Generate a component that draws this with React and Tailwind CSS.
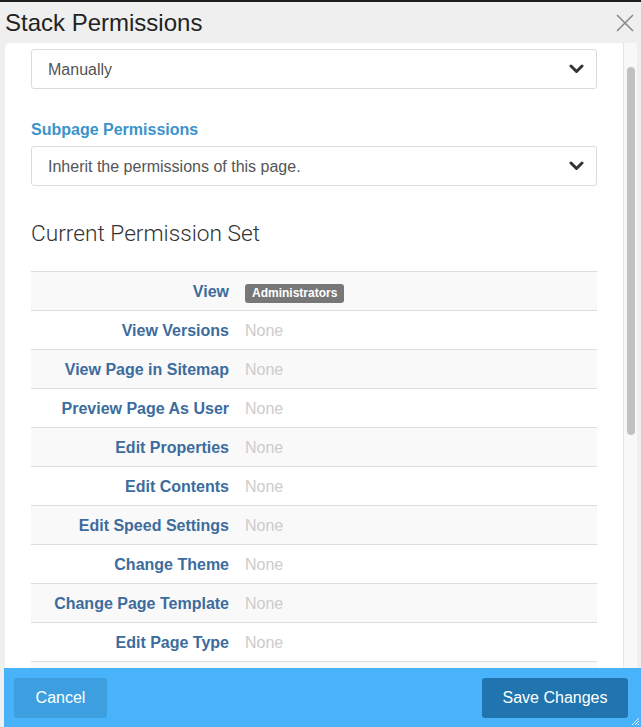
import React from "react";

const rows = [
  { label: "View", admin: true },
  { label: "View Versions" },
  { label: "View Page in Sitemap" },
  { label: "Preview Page As User" },
  { label: "Edit Properties" },
  { label: "Edit Contents" },
  { label: "Edit Speed Settings" },
  { label: "Change Theme" },
  { label: "Change Page Template" },
  { label: "Edit Page Type" },
  { label: "", empty: true },
];

const Chevron = () => (
  <svg width="15" height="10" viewBox="0 0 15 10" className="shrink-0">
    <polyline
      points="2,2 7.5,7.5 13,2"
      fill="none"
      stroke="#333"
      strokeWidth="3"
      strokeLinecap="round"
      strokeLinejoin="round"
    />
  </svg>
);

const Select = ({ value }) => (
  <div className="h-[40px] border border-[#dcdcdc] rounded-[3px] bg-white flex items-center justify-between pl-[16px] pr-[12px] text-[16px] text-[#555]">
    <span className="pt-[2px]">{value}</span>
    <Chevron />
  </div>
);

export default function App() {
  return (
    <div
      className="h-[727px] w-[641px] flex flex-col bg-[#efefef] overflow-hidden"
      style={{ fontFamily: '"Liberation Sans", Arial, sans-serif' }}
    >
      <div className="h-[2px] bg-[#1e1e1e]" />
      <div className="h-[41px] flex items-center justify-between pl-[5px] pr-[5px]">
        <h1 className="text-[24px] text-[#222] leading-none">Stack Permissions</h1>
        <svg width="20" height="20" viewBox="0 0 20 20" className="mr-[1px] mt-[1px]">
          <path d="M2 2 L18 18 M18 2 L2 18" stroke="#8a8a8a" strokeWidth="1.6" />
        </svg>
      </div>

      <div className="flex-1 flex min-h-0">
        <div className="ml-[5px] w-[618px] bg-white rounded-tl-[5px] rounded-tr-[2px] px-[26px] overflow-hidden">
          <div className="mt-[6px]">
            <Select value="Manually" />
          </div>
          <div className="mt-[31px] text-[16px] leading-[20px] font-bold text-[#3b93cb]">
            Subpage Permissions
          </div>
          <div className="mt-[6px]">
            <Select value="Inherit the permissions of this page." />
          </div>
          <h2
            className="mt-[33px] text-[22.7px] leading-[30px] font-light text-[#333]"
            style={{ fontFamily: "Roboto, 'Liberation Sans', sans-serif" }}
          >
            Current Permission Set
          </h2>
          <div className="mt-[22px]">
            {rows.map((r, i) => (
              <div
                key={i}
                className={`h-[39px] border-t border-[#dddddd] flex items-center pt-[2px] ${
                  i % 2 === 0 ? "bg-[#f9f9f9]" : "bg-white"
                }`}
              >
                {!r.empty && (
                  <>
                    <div className="w-[206px] pr-[8px] text-right text-[16px] font-bold text-[#3c6c9d]">
                      {r.label}
                    </div>
                    <div className="pl-[8px] text-[16px]">
                      {r.admin ? (
                        <span className="inline-block bg-[#777] text-white text-[12px] font-bold rounded-[3px] px-[7px] h-[19px] leading-[19px]">
                          Administrators
                        </span>
                      ) : (
                        <span className="text-[#cccccc]">None</span>
                      )}
                    </div>
                  </>
                )}
              </div>
            ))}
          </div>
        </div>
        <div className="w-[14px] bg-[#f8f8f8] border-l border-[#e6e6e6] pl-[3px]">
          <div className="mt-[24px] w-[8px] h-[368px] rounded-full bg-[#c1c1c1]" />
        </div>
      </div>

      <div className="ml-[4px] h-[59px] bg-[#48b3fa] flex items-center justify-between pl-[10px] pr-[13px] relative">
        <button className="h-[40px] w-[93px] rounded-[3px] bg-[#3d9fe0] text-white text-[16px]">
          Cancel
        </button>
        <button className="h-[40px] w-[146px] rounded-[3px] bg-[#2175ae] text-white text-[16px]">
          Save Changes
        </button>
        <svg width="9" height="9" viewBox="0 0 9 9" className="absolute right-[1px] bottom-[1px]">
          <path d="M8 1 L1 8 M8 4 L4 8 M8 7 L7 8" stroke="#e8f4fc" strokeWidth="1" />
        </svg>
      </div>
    </div>
  );
}
